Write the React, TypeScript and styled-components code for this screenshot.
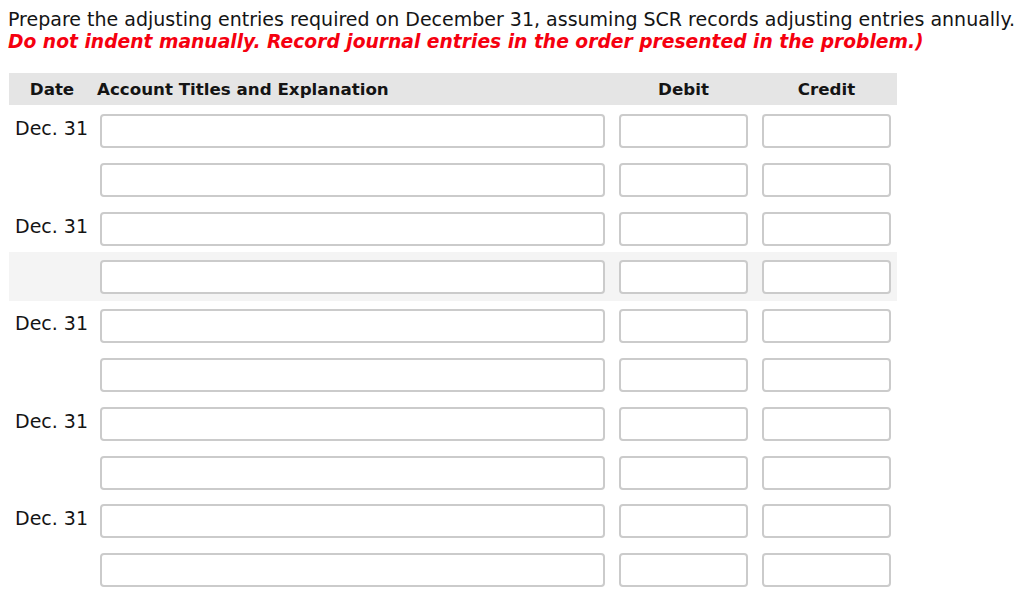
import React from 'react';
import styled, { createGlobalStyle } from 'styled-components';

const colors = {
  text: '#141414',
  red: '#f5000f',
  header: '#e5e5e5',
  shade: '#f4f4f4',
  border: '#cbcbcb',
};

const GlobalStyle = createGlobalStyle`
  html, body {
    overflow: hidden;
  }
  body {
    margin: 8px;
    background: #ffffff;
    color: ${colors.text};
    font-family: "DejaVu Sans", Verdana, sans-serif;
  }
`;

const Prompt = styled.div`
  font-size: 19px;
  line-height: 22px;
  white-space: nowrap;
`;

const Line = styled.div``;

const Note = styled.span<{ $size?: number }>`
  color: ${colors.red};
  font-weight: bold;
  font-style: italic;
  font-size: ${(p) => (p.$size ? `${p.$size}px` : 'inherit')};
`;

const Table = styled.div`
  width: 888px;
  margin: 20px 0 0 1px;
`;

const grid = `
  display: grid;
  grid-template-columns: 77px 505px 129px 129px;
  column-gap: 14px;
  padding-right: 6px;
`;

const HeaderRow = styled.div`
  ${grid}
  height: 32px;
  background: ${colors.header};
  font-size: 16.7px;
  font-weight: bold;
  line-height: 32px;
  margin-bottom: 1px;
`;

const HeadCell = styled.div<{ $align: 'left' | 'center'; $indent?: number }>`
  text-align: ${(p) => p.$align};
  padding-left: ${(p) => p.$indent ?? 0}px;
  white-space: nowrap;
`;

const AccountHead = styled(HeadCell)`
  margin-left: -3px;
`;

const Row = styled.div<{ $shaded?: boolean }>`
  ${grid}
  height: 48.8px;
  box-sizing: border-box;
  padding-top: 8px;
  background: ${(p) => (p.$shaded ? colors.shade : 'transparent')};
`;

const DateCell = styled.div`
  font-size: 19px;
  line-height: 22px;
  padding: 3px 0 0 6px;
  white-space: nowrap;
`;

const Field = styled.input`
  box-sizing: border-box;
  width: 100%;
  height: 34px;
  margin: 0;
  border: 2px solid ${colors.border};
  border-radius: 4px;
  background: #ffffff;
  outline: none;
  padding: 0 6px;
  font-family: inherit;
  font-size: 15px;
`;

const rows = Array.from({ length: 10 }, (_, i) => i);

function App() {
  return (
    <>
      <GlobalStyle />
      <Prompt>
        <Line>
          Prepare the adjusting entries required on December 31, assuming SCR records adjusting entries annually.{' '}
          <Note>
            (If no entry is required for a transaction/event, select "No journal entry required" in the first account field.
          </Note>
        </Line>
        <Line>
          <Note $size={18.7}>Do not indent manually. Record journal entries in the order presented in the problem.)</Note>
        </Line>
      </Prompt>
      <Table>
        <HeaderRow>
          <HeadCell $align="center" $indent={9}>Date</HeadCell>
          <AccountHead $align="left">Account Titles and Explanation</AccountHead>
          <HeadCell $align="center">Debit</HeadCell>
          <HeadCell $align="center">Credit</HeadCell>
        </HeaderRow>
        {rows.map((i) => (
          <Row key={i} $shaded={i === 3}>
            <DateCell>{i % 2 === 0 ? 'Dec. 31' : ''}</DateCell>
            <Field type="text" />
            <Field type="text" />
            <Field type="text" />
          </Row>
        ))}
      </Table>
    </>
  );
}

export default App;
